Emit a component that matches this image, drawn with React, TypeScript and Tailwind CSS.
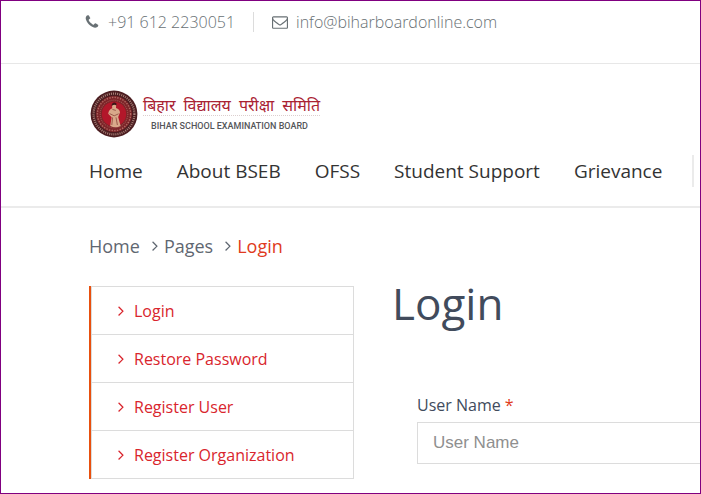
import { useState } from "react";

const boardName = ["बिहार", "विद्यालय", "परीक्षा", "समिति"];

const navItems = ["Home", "About BSEB", "OFSS", "Student Support", "Grievance"];

const sideLinks = ["Login", "Restore Password", "Register User", "Register Organization"];

function PhoneIcon() {
  return (
    <svg viewBox="0 0 1792 1792" className="size-4 shrink-0 fill-[#687074]" aria-hidden="true">
      <path d="M1600 1240q0 27-10 70.5t-21 68.5q-21 50-122 106-94 51-186 51-27 0-53-3.5t-57.5-12.5-47-14.5-55.5-20.5-49-18q-98-35-175-83-127-79-264-216t-216-264q-48-77-83-175-3-9-18-49t-20.5-55.5-14.5-47-12.5-57.5-3.5-53q0-92 51-186 56-101 106-122 25-11 68.5-21t70.5-10q14 0 21 3 18 6 53 76 11 19 30 54t35 63.5 31 53.5q3 4 17.5 25t21.5 35.5 7 28.5q0 20-28.5 50t-62 55-62 53-28.5 46q0 9 5 22.5t8.5 20.5 14 24 11.5 19q76 137 174 235t235 174q2 1 19 11.5t24 14 20.5 8.5 22.5 5q18 0 46-28.5t53-62 55-62 50-28.5q14 0 28.5 7t35.5 21.5 25 17.5q25 15 53.5 31t63.5 35 54 30q70 35 76 53 3 7 3 21z" />
    </svg>
  );
}

function MailIcon() {
  return (
    <svg viewBox="0 0 1792 1792" className="size-4 shrink-0 fill-[#687074]" aria-hidden="true">
      <path d="M1664 1504v-768q-32 36-69 66-268 206-426 338-51 43-83 67t-86.5 48.5-102.5 24.5h-2q-48 0-102.5-24.5t-86.5-48.5-83-67q-158-132-426-338-37-30-69-66v768q0 13 9.5 22.5t22.5 9.5h1472q13 0 22.5-9.5t9.5-22.5zm0-1051v-24.5l-.5-13-3-12.5-5.5-9-9-7.5-14-2.5h-1472q-13 0-22.5 9.5t-9.5 22.5q0 168 147 284 193 152 401 317 6 5 35 29.5t46 37.5 44.5 31.5 50.5 27.5 43 9h2q20 0 43-9t50.5-27.5 44.5-31.5 46-37.5 35-29.5q208-165 401-317 54-43 100.5-115.5t46.5-131.5zm128-37v1088q0 66-47 113t-113 47h-1472q-66 0-113-47t-47-113v-1088q0-66 47-113t113-47h1472q66 0 113 47t47 113z" />
    </svg>
  );
}

function AngleRight({ className }: { className: string }) {
  return (
    <svg viewBox="576 416 608 1056" className={className} aria-hidden="true">
      <path d="M1171 960q0 13-10 23l-466 466q-10 10-23 10t-23-10l-50-50q-10-10-10-23t10-23l393-393-393-393q-10-10-10-23t10-23l50-50q10-10 23-10t23 10l466 466q10 10 10 23z" />
    </svg>
  );
}

function Seal() {
  return (
    <svg viewBox="0 0 48 48" className="size-12 shrink-0" aria-hidden="true">
      <circle cx="24" cy="24" r="23.4" fill="#4b1d20" />
      <circle cx="24" cy="24" r="20.4" fill="none" stroke="#a88078" strokeWidth="2.2" strokeDasharray="1 1.1" />
      <circle cx="24" cy="24" r="18" fill="#7c2529" />
      <circle cx="24" cy="24" r="16.6" fill="none" stroke="#b06a63" strokeWidth="1.4" strokeDasharray="1.4 1.3" />
      <circle cx="24" cy="24" r="13.8" fill="none" stroke="#a0504e" strokeWidth="1.2" strokeDasharray="1 1" />
      <circle cx="24" cy="24" r="12.2" fill="#b3172a" />
      {/* seated figure */}
      <path d="M22 14.4q2.4-2.2 4.2.2l-.2 3.4q3.8 1 4 4.6l-1.8 4.4 2.4 9q-5 2.4-10.4 0l1.4-8.8-3.4-3.4q.6-4.4 4-5.6z" fill="#d9a98a" />
      <path d="M21.6 16q0-3.8 3-3.6 2.4.2 1.8 3-2-1.6-4.8.6z" fill="#3d1517" />
      <path d="M19.6 23.6l4.6 2.2 4.4-2M22.6 27.4l-.8 7.6M26 27.4l1.4 7.6M22.4 19.4l3.4 1" fill="none" stroke="#7e3a30" strokeWidth="0.7" />
    </svg>
  );
}

export default function App() {
  const [userName, setUserName] = useState("");

  return (
    <div className="min-h-screen overflow-hidden border border-[#800080] bg-white font-['Open_Sans',sans-serif]">
      <div className="flex h-[63px] items-start border-b border-[#e7e7e7] pt-[11px] pl-[83px] text-base font-light text-[#687074]">
        <a href="#" className="flex h-5 items-center gap-2 leading-5">
          <PhoneIcon />
          +91 612 2230051
        </a>
        <span className="mx-[18px] h-5 w-px bg-[#dcdcdc]" />
        <a href="#" className="flex h-5 items-center gap-2 leading-5">
          <MailIcon />
          info@biharboardonline.com
        </a>
      </div>

      <header className="border-b-2 border-[#ebebeb] pt-[26px] pl-[88px]">
        <a href="#" className="flex items-center gap-[5px] pl-px">
          <Seal />
          <div className="flex flex-col pb-0.5">
            <span className="flex gap-2 border-b border-dotted border-[#dccfcf] font-['Noto_Sans','Noto_Sans_Devanagari',sans-serif] text-base leading-5 text-[#a92232]">
              {boardName.map((word) => (
                <span key={word}>{word}</span>
              ))}
            </span>
            <span className="pt-1 pl-2 font-[Roboto,sans-serif] text-[9px] leading-3 font-medium text-[#55565a]">
              BIHAR SCHOOL EXAMINATION BOARD
            </span>
          </div>
        </a>
        <nav className="flex h-[68px] items-center gap-[34px] pb-0.5 text-[19px] whitespace-nowrap text-[#333]">
          {navItems.map((item) => (
            <a key={item} href="#">
              {item}
            </a>
          ))}
          <span className="-ml-1 h-8 w-0.5 shrink-0 bg-[#ebebeb]" />
        </nav>
      </header>

      <nav aria-label="Breadcrumb" className="flex items-center gap-3 pt-[22px] pl-[88px] text-lg leading-8 text-[#5f6771]">
        <a href="#">Home</a>
        <span className="flex items-center gap-1.5">
          <AngleRight className="h-2.5 w-1.5 fill-[#5f6771]" />
          <a href="#">Pages</a>
        </span>
        <span className="flex items-center gap-1.5">
          <AngleRight className="h-2.5 w-1.5 fill-[#5f6771]" />
          <a href="#" className="text-[#e03a20]">
            Login
          </a>
        </span>
      </nav>

      <div className="flex pt-6 pl-[88px]">
        <ul className="w-[265px] shrink-0 self-start border-l-2 border-[#e8500e]">
          {sideLinks.map((label) => (
            <li key={label} className="border-x border-b border-[#dcdcdc] first:border-t">
              <a href="#" className="flex h-[47px] items-center gap-2.5 pl-[26px] text-base text-[#d9252d]">
                <AngleRight className="h-2.5 w-1.5 fill-[#d9252d]" />
                {label}
              </a>
            </li>
          ))}
        </ul>

        <main className="min-w-0 flex-1 pl-[38px]">
          <h1 className="text-[44px] leading-[34px] text-[#414b5c]">Login</h1>
          <form className="pt-[75px] pl-[25px]">
            <label htmlFor="userName" className="block text-base leading-5 text-[#414b5c]">
              User Name <span className="text-[#e03a20]">*</span>
            </label>
            <input
              id="userName"
              type="text"
              value={userName}
              onChange={(e) => setUserName(e.target.value)}
              placeholder="User Name"
              className="mt-[7px] h-[42px] w-full border border-r-0 border-[#dcdcdc] px-[15px] font-['Liberation_Sans',sans-serif] text-[17px] text-[#414b5c] outline-none placeholder:text-[#8f8f8f]"
            />
          </form>
        </main>
      </div>
    </div>
  );
}
